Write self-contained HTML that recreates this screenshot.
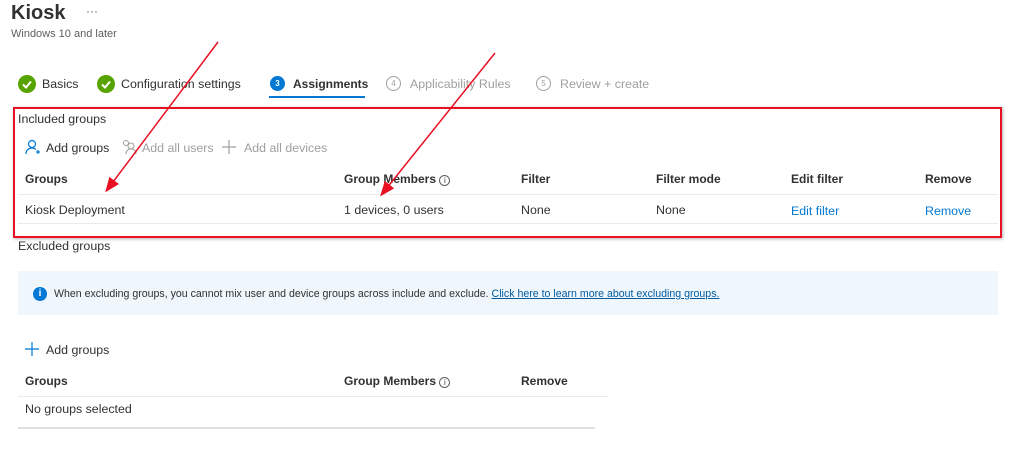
<!DOCTYPE html>
<html><head><meta charset="utf-8"><style>
*{margin:0;padding:0;box-sizing:border-box}
body{width:1024px;height:456px;background:#fff;font-family:"Liberation Sans",sans-serif;color:#323130;position:relative;overflow:hidden}
.a{position:absolute;white-space:nowrap}
.t{font-size:12.4px}
.h{font-size:12px;font-weight:bold;color:#323130}
.g{color:#a19f9d}
.l{color:#0078d4}
.line{position:absolute;height:1px;background:#edebe9}
.chk{position:absolute;width:18px;height:18px;border-radius:50%;background:#57a300}
.num{position:absolute;width:15px;height:15px;border-radius:50%;border:1px solid #a19f9d;font-size:8px;color:#a19f9d;text-align:center;line-height:13px}
</style></head><body>
<div class="a" style="left:11px;top:2px;font-size:20px;font-weight:bold;color:#323130">Kiosk</div>
<div class="a" style="left:86px;top:4px;font-size:12px;color:#605e5c">···</div>
<div class="a" style="left:11px;top:28px;font-size:11px;color:#605e5c">Windows 10 and later</div>

<div class="chk" style="left:18px;top:75px"><svg width="18" height="18"><path d="M5 9.5l3 3 5-6" stroke="#fff" stroke-width="2" fill="none"/></svg></div>
<div class="a t" style="left:42px;top:77px">Basics</div>
<div class="chk" style="left:97px;top:75px"><svg width="18" height="18"><path d="M5 9.5l3 3 5-6" stroke="#fff" stroke-width="2" fill="none"/></svg></div>
<div class="a t" style="left:121px;top:77px">Configuration settings</div>
<div class="a" style="left:270px;top:76px;width:15px;height:15px;border-radius:50%;background:#0078d4;color:#fff;font-size:8px;font-weight:bold;text-align:center;line-height:15px">3</div>
<div class="a" style="left:293px;top:77px;font-size:12px;font-weight:bold">Assignments</div>
<div class="a" style="left:269px;top:96px;width:96px;height:2px;background:#0078d4"></div>
<div class="num" style="left:386px;top:76px">4</div>
<div class="a t g" style="left:410px;top:77px">Applicability Rules</div>
<div class="num" style="left:536px;top:76px">5</div>
<div class="a t g" style="left:560px;top:77px">Review + create</div>

<div class="a" style="left:13px;top:107px;width:989px;height:131px;border:2px solid #e81123;box-shadow:1px 1px 3px rgba(0,0,0,.3)"></div>
<div class="a t" style="left:18px;top:112px">Included groups</div>
<svg class="a" style="left:25px;top:139px" width="16" height="16"><circle cx="7" cy="5" r="3.5" stroke="#0078d4" fill="none" stroke-width="1.2"/><path d="M1 15c0-4 3-6 6-6 2 0 3 .5 4 1.5" stroke="#0078d4" fill="none" stroke-width="1.2"/><path d="M13 11v4M11 13h4" stroke="#0078d4" stroke-width="1.2"/></svg>
<div class="a t" style="left:46px;top:141px">Add groups</div>
<svg class="a" style="left:121px;top:139px" width="16" height="16"><circle cx="5" cy="4" r="2.5" stroke="#a19f9d" fill="none"/><circle cx="10" cy="7" r="3" stroke="#a19f9d" fill="none"/><path d="M5 15c0-3 2-5 5-5s5 2 5 5" stroke="#a19f9d" fill="none"/></svg>
<div class="a t g" style="left:142px;top:141px">Add all users</div>
<svg class="a" style="left:222px;top:140px" width="14" height="14"><path d="M7 0v14M0 7h14" stroke="#a19f9d" stroke-width="1.2"/></svg>
<div class="a t g" style="left:244px;top:141px">Add all devices</div>

<div class="a h" style="left:25px;top:172px">Groups</div>
<div class="a h" style="left:344px;top:172px">Group Members <span style="display:inline-block;width:11px;height:11px;border:1px solid #605e5c;border-radius:50%;font-size:8px;line-height:9px;text-align:center;font-weight:normal;vertical-align:0">i</span></div>
<div class="a h" style="left:521px;top:172px">Filter</div>
<div class="a h" style="left:656px;top:172px">Filter mode</div>
<div class="a h" style="left:791px;top:172px">Edit filter</div>
<div class="a h" style="left:925px;top:172px">Remove</div>
<div class="line" style="left:18px;top:194px;width:980px"></div>
<div class="a t" style="left:25px;top:203px">Kiosk Deployment</div>
<div class="a t" style="left:344px;top:203px">1 devices, 0 users</div>
<div class="a t" style="left:521px;top:203px">None</div>
<div class="a t" style="left:656px;top:203px">None</div>
<div class="a t l" style="left:791px;top:204px">Edit filter</div>
<div class="a t l" style="left:925px;top:204px">Remove</div>
<div class="line" style="left:18px;top:223px;width:980px"></div>

<div class="a t" style="left:18px;top:239px">Excluded groups</div>
<div class="a" style="left:18px;top:271px;width:980px;height:44px;background:#eff6fc"></div>
<div class="a" style="left:33px;top:287px;width:14px;height:14px;border-radius:50%;background:#0078d4;color:#fff;font-size:10px;font-weight:bold;text-align:center;line-height:14px">i</div>
<div class="a" style="left:54px;top:288px;font-size:10.6px;color:#323130">When excluding groups, you cannot mix user and device groups across include and exclude. <span style="color:#005a9e;text-decoration:underline">Click here to learn more about excluding groups.</span></div>

<svg class="a" style="left:25px;top:342px" width="14" height="14"><path d="M7 0v14M0 7h14" stroke="#0078d4" stroke-width="1.2"/></svg>
<div class="a t" style="left:46px;top:343px">Add groups</div>
<div class="a h" style="left:25px;top:374px">Groups</div>
<div class="a h" style="left:344px;top:374px">Group Members <span style="display:inline-block;width:11px;height:11px;border:1px solid #605e5c;border-radius:50%;font-size:8px;line-height:9px;text-align:center;font-weight:normal;vertical-align:0">i</span></div>
<div class="a h" style="left:521px;top:374px">Remove</div>
<div class="line" style="left:18px;top:396px;width:590px"></div>
<div class="a t" style="left:25px;top:402px">No groups selected</div>
<div class="line" style="left:18px;top:427px;width:577px;height:2px;background:#e1dfdd"></div>

<svg class="a" style="left:0;top:0" width="1024" height="456">
<defs><marker id="m" markerWidth="10" markerHeight="8" refX="8" refY="4" orient="auto"><path d="M0 0L10 4L0 8z" fill="#e81123"/></marker></defs>
<line x1="218" y1="42" x2="107" y2="190" stroke="#e81123" stroke-width="1.5" marker-end="url(#m)"/>
<line x1="495" y1="53" x2="382" y2="194" stroke="#e81123" stroke-width="1.5" marker-end="url(#m)"/>
</svg>
</body></html>
